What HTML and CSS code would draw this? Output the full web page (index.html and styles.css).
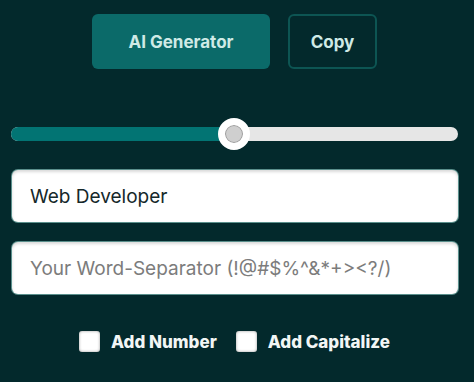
FILE: index.html
```html
<!DOCTYPE html>
<html lang="en">
<head>
<meta charset="UTF-8">
<meta name="viewport" content="width=device-width, initial-scale=1.0">
<title>Username generator</title>
<link rel="stylesheet" href="styles.css">
</head>
<body>
<div class="wrapper">
<div class="actions">
<button class="btn btn-main">AI Generator</button>
<button class="btn btn-outline">Copy</button>
</div>
<div class="slider">
<div class="slider-fill" style="width: 223px"></div>
<div class="slider-thumb" style="left: 223px"></div>
</div>
<input type="text" class="field" value="Web Developer">
<input type="text" class="field" placeholder="Your Word-Separator (!@#$%^&*+><?/)">
<div class="options">
<label class="option"><input type="checkbox"> Add Number</label>
<label class="option"><input type="checkbox"> Add Capitalize</label>
</div>
</div>
</body>
</html>
```
FILE: styles.css
```css
body {
    margin: 0;
    background-color: #03292c;
    font-family: Inter, "Noto Sans", sans-serif;
}

.wrapper {
    padding: 14px 16px 0 11px;
}

.actions {
    display: flex;
    justify-content: center;
    gap: 18px;
}

.btn {
    height: 55px;
    border-radius: 6px;
    font: 700 17px Inter, sans-serif;
    color: #cfeae6;
    cursor: pointer;
}

.btn-main {
    width: 178px;
    border: none;
    background-color: #0b6a69;
}

.btn-outline {
    width: 89px;
    border: 2px solid #0d5553;
    background-color: #03292c;
}

.slider {
    position: relative;
    height: 14px;
    margin: 58px 0 0;
    border-radius: 7px;
    background-color: #e6e6e6;
}

.slider-fill {
    height: 100%;
    border-radius: 7px 0 0 7px;
    background-color: #027473;
}

.slider-thumb {
    position: absolute;
    top: 50%;
    width: 18px;
    height: 18px;
    margin: -16px 0 0 -16px;
    border: 7px solid #fff;
    border-radius: 50%;
    background-color: #cfcfcf;
    box-shadow: inset 0 0 0 1px #9c9c9c;
}

.field {
    display: block;
    box-sizing: border-box;
    width: 446px;
    height: 52px;
    margin: 29px 0 0 1px;
    padding: 0 18px;
    border: none;
    border-radius: 6px;
    background: #fff;
    box-shadow: inset 0 2px 3px rgba(0, 0, 0, 0.15), 0 0 0 1px #5a8f8c;
    font: 19px Inter, sans-serif;
    color: #15282a;
}

.field + .field {
    margin-top: 20px;
}

.field::placeholder {
    color: #7c7c7c;
}

.options {
    display: flex;
    justify-content: center;
    gap: 19px;
    margin-top: 37px;
}

.option {
    display: flex;
    align-items: center;
    gap: 11px;
    color: #f2f6f5;
    font-size: 17px;
    font-weight: 800;
}

.option input {
    appearance: none;
    width: 21px;
    height: 21px;
    margin: 0;
    border-radius: 3px;
    background: #fff;
    box-shadow: inset 0 0 3px rgba(0, 0, 0, 0.4);
}
```
